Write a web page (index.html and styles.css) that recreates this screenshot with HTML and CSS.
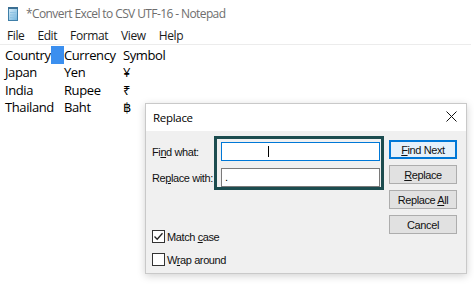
FILE: index.html
```html
<!DOCTYPE html>
<html lang="en">
<head>
    <meta charset="UTF-8">
    <title>*Convert Excel to CSV UTF-16 - Notepad</title>
    <link rel="stylesheet" href="styles.css">
</head>
<body>
    <div class="window">
        <div class="titlebar">
            <svg class="app-icon" width="12" height="15" viewBox="0 0 12 15">
                <defs>
                    <linearGradient id="pad" x1="0" y1="0" x2="1" y2="1">
                        <stop offset="0" stop-color="#d7ecf8"/>
                        <stop offset="1" stop-color="#6fb3dc"/>
                    </linearGradient>
                </defs>
                <rect x="1.5" y="2.5" width="9" height="12" fill="url(#pad)" stroke="#3f7fa8"/>
                <rect x="1" y="1" width="10" height="2" fill="#3b6f93"/>
                <line x1="3" y1="6.5" x2="9" y2="6.5" stroke="#8fc3e3"/>
                <line x1="3" y1="9" x2="9" y2="9" stroke="#8fc3e3"/>
                <line x1="3" y1="11.5" x2="9" y2="11.5" stroke="#8fc3e3"/>
            </svg>
            <span class="title-text">*Convert Excel to CSV UTF-16 - Notepad</span>
        </div>
        <div class="menubar">
            <span>File</span>
            <span>Edit</span>
            <span>Format</span>
            <span>View</span>
            <span>Help</span>
        </div>
        <div class="editor">Country<span class="sel">	</span>Currency	Symbol
Japan	Yen	¥
India	Rupee	₹
Thailand	Baht	฿</div>
    </div>

    <div class="dialog">
        <div class="dlg-title">
            <span>Replace</span>
            <svg class="close" width="11" height="11" viewBox="0 0 11 11">
                <path d="M0.5 0.5 L10.5 10.5 M10.5 0.5 L0.5 10.5" stroke="#111" stroke-width="1"/>
            </svg>
        </div>
        <div class="dlg-body">
            <div class="dlg-main">
                <div class="fields">
                    <div class="field">
                        <label>Fi<u>n</u>d what:</label>
                        <div class="input focus"><span class="caret"></span></div>
                    </div>
                    <div class="field">
                        <label>Re<u>p</u>lace with:</label>
                        <div class="input">.</div>
                    </div>
                </div>
                <div class="options">
                    <div class="check">
                        <span class="box">
                            <svg width="11" height="11" viewBox="0 0 11 11">
                                <path d="M1.5 5.5 L4.2 8.3 L9.5 2.2" fill="none" stroke="#222" stroke-width="1.3"/>
                            </svg>
                        </span>
                        <span>Match <u>c</u>ase</span>
                    </div>
                    <div class="check">
                        <span class="box"></span>
                        <span>W<u>r</u>ap around</span>
                    </div>
                </div>
            </div>
            <div class="buttons">
                <button class="btn default"><u>F</u>ind Next</button>
                <button class="btn"><u>R</u>eplace</button>
                <button class="btn">Replace <u>A</u>ll</button>
                <button class="btn">Cancel</button>
            </div>
        </div>
        <div class="frame"></div>
    </div>
</body>
</html>
```

FILE: styles.css
```css
body {
    margin: 0;
    background: #fff;
    font-family: "Open Sans", "Noto Sans", "DejaVu Sans", sans-serif;
    color: #000;
}

.window {
    width: 474px;
    height: 287px;
    overflow: hidden;
}

.titlebar {
    height: 26px;
    display: flex;
    align-items: center;
    padding-left: 7px;
}
.app-icon {
    margin-right: 7px;
}
.title-text {
    font-size: 12px;
    letter-spacing: -0.6px;
    color: #6e6e6e;
}

.menubar {
    height: 18px;
    display: flex;
    align-items: center;
    gap: 13px;
    padding-left: 7px;
    font-size: 12px;
    letter-spacing: -0.4px;
    color: #1a1a1a;
    border-bottom: 1px solid #ececec;
    margin-right: 3px;
}

.editor {
    padding: 2px 0 0 5px;
    white-space: pre;
    tab-size: 59px;
    font-size: 13px;
    letter-spacing: -0.4px;
    line-height: 17.3px;
}
.sel {
    background: #3b8fef;
}

/* Replace dialog */
.dialog {
    position: absolute;
    left: 145px;
    top: 103px;
    width: 322px;
    height: 171px;
    box-sizing: border-box;
    border: 1px solid #c9c9c9;
    background: #f0f0f0;
    box-shadow: 0 2px 8px rgba(0,0,0,0.18);
    display: flex;
    flex-direction: column;
    font-family: "Liberation Sans", Arial, sans-serif;
    font-size: 11px;
    letter-spacing: -0.4px;
}
.dlg-title {
    height: 27px;
    background: #fff;
    display: flex;
    align-items: center;
    justify-content: space-between;
    padding: 0 9px 0 7px;
    font-family: "Open Sans", "Noto Sans", sans-serif;
    font-size: 11.5px;
    letter-spacing: -0.3px;
}
.close {
    margin-bottom: 2px;
}

.dlg-body {
    flex: 1;
    display: flex;
    padding: 9px 9px 7px 6px;
}
.dlg-main {
    flex: 1;
    display: flex;
    flex-direction: column;
    justify-content: space-between;
}
.fields {
    margin-top: 2px;
    display: flex;
    flex-direction: column;
    gap: 7px;
}
.field {
    display: flex;
    align-items: center;
}
.field label {
    width: 69px;
    color: #111;
}
.input {
    width: 159px;
    height: 19px;
    box-sizing: border-box;
    border: 1px solid #7a7a7a;
    background: #fff;
    padding-left: 3px;
    line-height: 17px;
}
.input.focus {
    border-color: #0078d7;
    position: relative;
}
.caret {
    position: absolute;
    left: 46px;
    top: 3px;
    width: 1px;
    height: 11px;
    background: #000;
}

.options {
    display: flex;
    flex-direction: column;
    gap: 10px;
}
.check {
    display: flex;
    align-items: center;
    gap: 2px;
    height: 13px;
    color: #111;
}
.box {
    width: 13px;
    height: 13px;
    box-sizing: border-box;
    border: 1px solid #333;
    background: #fff;
    display: flex;
    align-items: center;
    justify-content: center;
}

.buttons {
    margin-left: 9px;
    display: flex;
    flex-direction: column;
    gap: 6px;
}
.btn {
    width: 68px;
    height: 19px;
    box-sizing: border-box;
    border: 1px solid #adadad;
    background: #e1e1e1;
    font-family: inherit;
    font-size: 11px;
    letter-spacing: -0.4px;
    color: #111;
    padding: 0;
}
.btn.default {
    border-color: #0078d7;
    box-shadow: inset 0 0 0 1px #0078d7;
    background: #e5f1fb;
}

.frame {
    position: absolute;
    left: 68px;
    top: 32px;
    width: 170px;
    height: 54px;
    box-sizing: border-box;
    border: 3px solid #1c4c4f;
    pointer-events: none;
}
```
